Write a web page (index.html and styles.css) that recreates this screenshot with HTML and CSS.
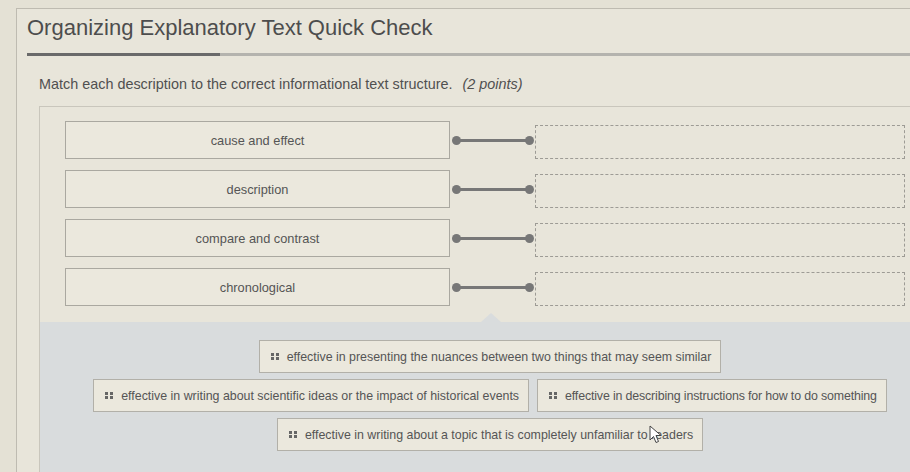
FILE: index.html
```html
<!DOCTYPE html>
<html lang="en">
<head>
    <meta charset="UTF-8">
    <meta name="viewport" content="width=device-width, initial-scale=1.0">
    <title>Organizing Explanatory Text Quick Check</title>
    <link rel="stylesheet" href="styles.css">
</head>
<body>
    <div class="screen">
        <div class="card">
            <h1 class="title">Organizing Explanatory Text Quick Check</h1>

            <div class="progress">
                <div class="progress-done"></div>
            </div>

            <p class="prompt">Match each description to the correct informational text structure. <em>(2 points)</em></p>

            <div class="question">
                <div class="pairs">
                    <div class="pair">
                        <div class="term">cause and effect</div>
                        <div class="link"><span class="dot"></span><span class="bar"></span><span class="dot"></span></div>
                        <div class="slot"></div>
                    </div>
                    <div class="pair">
                        <div class="term">description</div>
                        <div class="link"><span class="dot"></span><span class="bar"></span><span class="dot"></span></div>
                        <div class="slot"></div>
                    </div>
                    <div class="pair">
                        <div class="term">compare and contrast</div>
                        <div class="link"><span class="dot"></span><span class="bar"></span><span class="dot"></span></div>
                        <div class="slot"></div>
                    </div>
                    <div class="pair">
                        <div class="term">chronological</div>
                        <div class="link"><span class="dot"></span><span class="bar"></span><span class="dot"></span></div>
                        <div class="slot"></div>
                    </div>
                </div>

                <div class="bank">
                    <span class="notch"></span>
                    <div class="bank-row">
                        <div class="chip">
                            <svg class="grip" width="8" height="7" viewBox="0 0 8 7"><rect x="0" y="0" width="3" height="3"/><rect x="5" y="0" width="3" height="3"/><rect x="0" y="4" width="3" height="3"/><rect x="5" y="4" width="3" height="3"/></svg>
                            effective in presenting the nuances between two things that may seem similar
                        </div>
                    </div>
                    <div class="bank-row">
                        <div class="chip">
                            <svg class="grip" width="8" height="7" viewBox="0 0 8 7"><rect x="0" y="0" width="3" height="3"/><rect x="5" y="0" width="3" height="3"/><rect x="0" y="4" width="3" height="3"/><rect x="5" y="4" width="3" height="3"/></svg>
                            effective in writing about scientific ideas or the impact of historical events
                        </div>
                        <div class="chip chip-tight">
                            <svg class="grip" width="8" height="7" viewBox="0 0 8 7"><rect x="0" y="0" width="3" height="3"/><rect x="5" y="0" width="3" height="3"/><rect x="0" y="4" width="3" height="3"/><rect x="5" y="4" width="3" height="3"/></svg>
                            effective in describing instructions for how to do something
                        </div>
                    </div>
                    <div class="bank-row">
                        <div class="chip">
                            <svg class="grip" width="8" height="7" viewBox="0 0 8 7"><rect x="0" y="0" width="3" height="3"/><rect x="5" y="0" width="3" height="3"/><rect x="0" y="4" width="3" height="3"/><rect x="5" y="4" width="3" height="3"/></svg>
                            effective in writing about a topic that is completely unfamiliar to readers
                        </div>
                    </div>

                    <!-- mouse pointer resting on the last answer -->
                    <svg class="cursor" width="13" height="19" viewBox="0 0 13 19">
                        <path d="M1 1 L1 15 L4.5 11.5 L7 17.5 L9.5 16.5 L7 10.5 L12 10.5 Z" fill="#fff" stroke="#444" stroke-width="1" stroke-linejoin="round"/>
                    </svg>
                </div>
            </div>
        </div>
    </div>
</body>
</html>
```

FILE: styles.css
```css
body {
    margin: 0;
    padding: 0;
    font-family: "Liberation Sans", Arial, sans-serif;
    background-color: #e4e1d5;
    color: #555;
    overflow: hidden;
}
.screen {
    padding: 8px 0 0 16px;
    height: 464px;
}
.card {
    height: 100%;
    box-sizing: border-box;
    border-top: 1px solid #bebbb1;
    border-left: 1px solid #bebbb1;
    background-color: #e8e5da;
    padding: 6px 0 0 10px;
}
.title {
    margin: 0;
    font-size: 22px;
    line-height: 26px;
    font-weight: normal;
    color: #4d4d4d;
}
.progress {
    margin-top: 12px;
    height: 3px;
    background-color: #b4b3ae;
    display: flex;
}
.progress-done {
    width: 193px;
    background-color: #6a6a6a;
}
.prompt {
    margin: 20px 0 0 12px;
    font-size: 14.4px;
    line-height: 17px;
    color: #505050;
}
.prompt em {
    margin-left: 6px;
}
.question {
    margin: 13px 0 0 12px;
    border-top: 1px solid #c9c6bc;
    border-left: 1px solid #c9c6bc;
    width: 880px;
}
.pairs {
    display: flex;
    flex-direction: column;
    gap: 11px;
    padding: 14px 0 16px 25px;
}
.pair {
    display: flex;
    height: 38px;
}
.term {
    width: 385px;
    box-sizing: border-box;
    border: 1px solid #aaa8a0;
    background-color: #ebe8dd;
    display: flex;
    align-items: center;
    justify-content: center;
    font-size: 12.8px;
    color: #555;
}
.link {
    width: 85px;
    display: flex;
    align-items: center;
    padding: 0 1px 0 2px;
    box-sizing: border-box;
}
.dot {
    width: 9px;
    height: 9px;
    border-radius: 50%;
    background-color: #777;
    flex-shrink: 0;
}
.bar {
    flex: 1;
    height: 3px;
    margin: 0 -2px;
    background-color: #777;
}
.slot {
    width: 370px;
    box-sizing: border-box;
    border: 1px dashed #9d9b95;
    margin-top: 4px;
}
.bank {
    position: relative;
    background-color: #d9dcdd;
    padding: 18px 0 20px 20px;
    display: flex;
    flex-direction: column;
    gap: 6px;
    height: 150px;
    box-sizing: border-box;
}
.notch {
    position: absolute;
    left: 441px;
    top: -9px;
    width: 0;
    height: 0;
    border-left: 10px solid transparent;
    border-right: 10px solid transparent;
    border-bottom: 9px solid #d9dcdd;
}
.bank-row {
    display: flex;
    justify-content: center;
    gap: 8px;
}
.chip {
    height: 33px;
    box-sizing: border-box;
    border: 1px solid #b2b0a8;
    background-color: #ebe8dd;
    display: flex;
    align-items: center;
    gap: 8px;
    padding: 0 9px 0 11px;
    font-size: 12.4px;
    color: #555;
    white-space: nowrap;
}
.chip-tight {
    letter-spacing: -0.15px;
}
.grip {
    fill: #666;
    flex-shrink: 0;
}
.cursor {
    position: absolute;
    left: 609px;
    top: 103px;
}
```
